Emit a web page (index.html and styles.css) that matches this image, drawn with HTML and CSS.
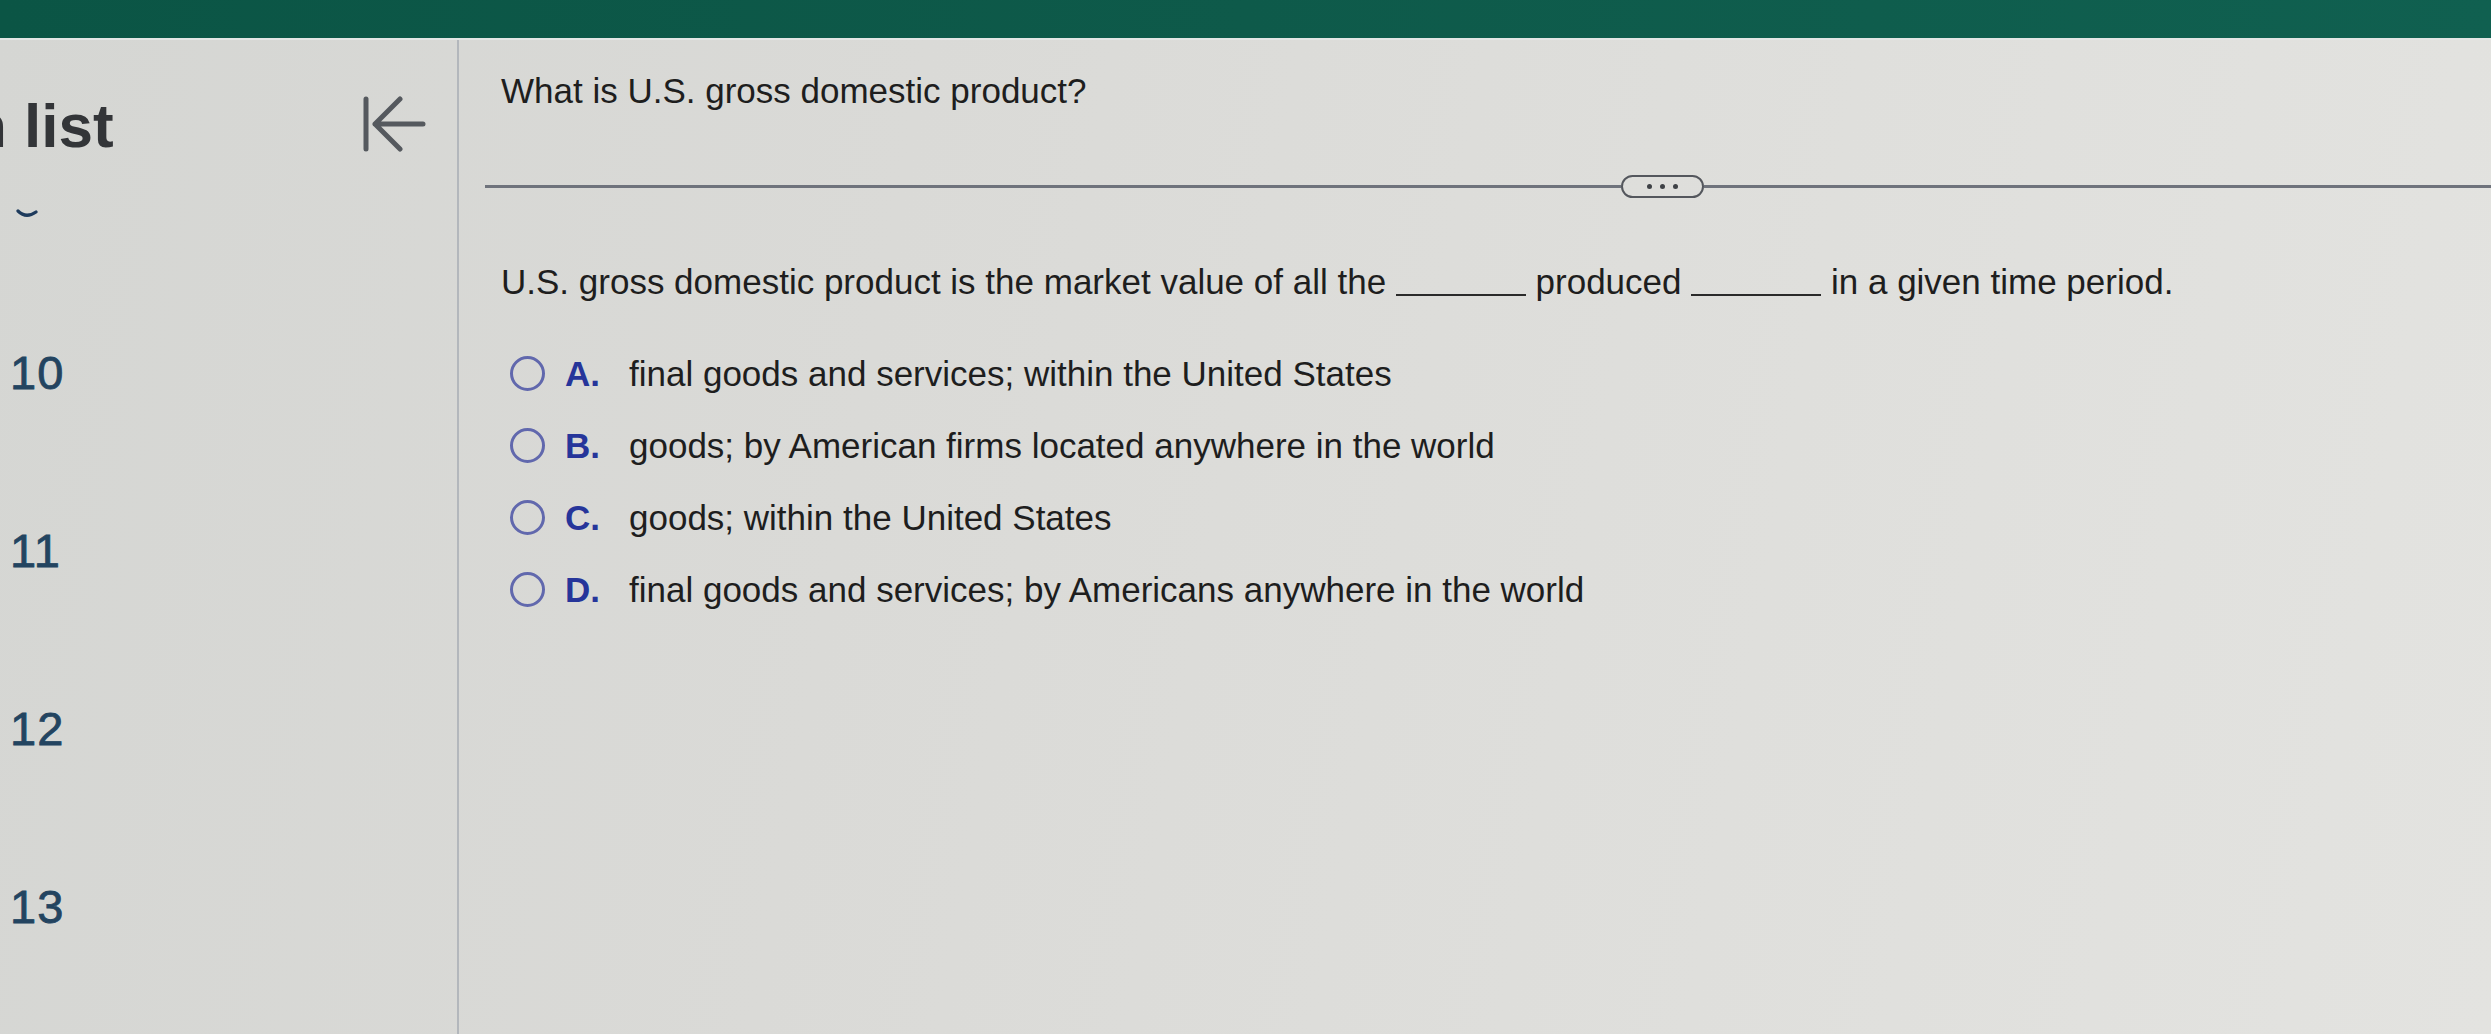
FILE: index.html
```html
<!DOCTYPE html>
<html lang="en">
<head>
<meta charset="utf-8">
<title>Question</title>
<link rel="stylesheet" href="styles.css">
</head>
<body>
<div class="topbar"></div>
<div class="page">
  <aside class="sidebar">
    <div class="side-head">
      <div class="side-title">n list</div>
      <svg class="collapse" width="64" height="56" viewBox="0 0 64 56" aria-hidden="true">
        <path d="M4 3 V53" stroke="#55595e" stroke-width="5" fill="none" stroke-linecap="round"/>
        <path d="M61 28 H13 M38 3 L13 28 L38 53" stroke="#55595e" stroke-width="5" fill="none" stroke-linecap="round" stroke-linejoin="round"/>
      </svg>
    </div>
    <svg class="chev" width="22" height="10" viewBox="0 0 22 10" aria-hidden="true">
      <path d="M2 2 Q10 10 20 3" stroke="#1d3a5c" stroke-width="3.2" fill="none" stroke-linecap="round"/>
    </svg>
    <ol class="qnums">
      <li>10</li>
      <li>11</li>
      <li>12</li>
      <li>13</li>
    </ol>
  </aside>
  <main class="content">
    <h1 class="qtitle">What is U.S. gross domestic product?</h1>
    <div class="divider">
      <span class="rule rule-left"></span>
      <span class="pill"><i></i><i></i><i></i></span>
      <span class="rule rule-right"></span>
    </div>
    <p class="stem">U.S. gross domestic product is the market value of all the <span class="blank"></span> produced <span class="blank"></span> in a given time period.</p>
    <ul class="options">
      <li class="opt"><span class="radio"></span><span class="letter">A.</span><span class="otext">final goods and services; within the United States</span></li>
      <li class="opt"><span class="radio"></span><span class="letter">B.</span><span class="otext">goods; by American firms located anywhere in the world</span></li>
      <li class="opt"><span class="radio"></span><span class="letter">C.</span><span class="otext">goods; within the United States</span></li>
      <li class="opt"><span class="radio"></span><span class="letter">D.</span><span class="otext">final goods and services; by Americans anywhere in the world</span></li>
    </ul>
  </main>
</div>
</body>
</html>
```
FILE: styles.css
```css
html, body {
  margin: 0;
  padding: 0;
  width: 2491px;
  height: 1034px;
  overflow: hidden;
}
body {
  font-family: "Liberation Sans", Arial, sans-serif;
  background: linear-gradient(100deg, #d5d6d3 0%, #dadad7 35%, #dfdfdc 70%, #e3e3e0 100%);
  color: #222;
}
.topbar {
  height: 38px;
  background: linear-gradient(90deg, #0b5545 0%, #0e5a4a 50%, #106050 100%);
  border-bottom: 2px solid #e3e6e5;
}
.page {
  display: flex;
  height: 994px;
}
.sidebar {
  width: 457px;
  flex: none;
  border-right: 2px solid #b3b7bc;
  padding-top: 50px;
  overflow: hidden;
  display: flex;
  flex-direction: column;
}
.side-head {
  display: flex;
  justify-content: space-between;
  align-items: flex-start;
  height: 72px;
}
.side-title {
  font-size: 62px;
  line-height: 72px;
  font-weight: bold;
  color: #333538;
  margin-left: -31px;
  white-space: nowrap;
}
.collapse {
  margin-top: 6px;
  margin-right: 31px;
}
.chev {
  margin-top: 47px;
  margin-left: 16px;
}
.qnums {
  list-style: none;
  margin: 128px 0 0 0;
  padding: 0 0 0 10px;
  display: flex;
  flex-direction: column;
  gap: 127px;
}
.qnums li {
  font-size: 47px;
  line-height: 51px;
  color: #234460;
  -webkit-text-stroke: 0.8px #234460;
  letter-spacing: 1px;
}
.content {
  flex: 1;
  padding-left: 26px;
  display: flex;
  flex-direction: column;
}
.qtitle {
  margin: 31px 0 0 16px;
  font-size: 35px;
  line-height: 40px;
  font-weight: normal;
  color: #1e1e1e;
}
.divider {
  margin-top: 63px;
  height: 24px;
  display: flex;
  align-items: center;
}
.rule {
  height: 3px;
  background: #6f737c;
}
.rule-left {
  width: 1136px;
  flex: none;
}
.rule-right {
  flex: 1;
}
.pill {
  width: 79px;
  height: 19px;
  border: 2.5px solid #54575d;
  border-radius: 12px;
  display: flex;
  justify-content: center;
  align-items: center;
  gap: 8px;
  flex: none;
}
.pill i {
  width: 5px;
  height: 5px;
  border-radius: 50%;
  background: #3e4146;
}
.stem {
  margin: 64px 0 0 16px;
  font-size: 35px;
  line-height: 40px;
  color: #1e1e1e;
  white-space: nowrap;
}
.blank {
  display: inline-block;
  width: 130px;
  height: 1px;
  border-bottom: 2px solid #2a2a2a;
  vertical-align: -2px;
}
.options {
  list-style: none;
  margin: 52px 0 0 16px;
  padding: 0;
  display: flex;
  flex-direction: column;
  gap: 32px;
}
.opt {
  display: flex;
  align-items: center;
  height: 40px;
  font-size: 35px;
  line-height: 40px;
}
.radio {
  width: 29px;
  height: 29px;
  border: 3px solid #6168ad;
  border-radius: 50%;
  margin-left: 9px;
  margin-top: -2px;
  flex: none;
}
.letter {
  margin-left: 20px;
  width: 64px;
  font-weight: bold;
  color: #26359a;
  flex: none;
}
.otext {
  color: #1e1e1e;
  white-space: nowrap;
}
```
